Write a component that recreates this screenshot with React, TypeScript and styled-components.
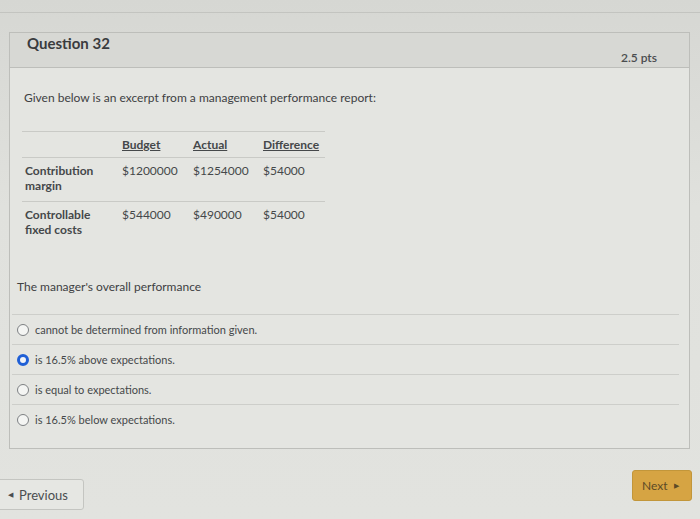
import React from "react";
import styled, { createGlobalStyle } from "styled-components";

const Global = createGlobalStyle`
  html, body { margin: 0; padding: 0; background: #dcddd9; }
  body { font-family: Lato, "Open Sans", "Liberation Sans", sans-serif; color: #3e4143; }
  * { box-sizing: border-box; }
`;

const Page = styled.div`
  width: 700px;
  height: 519px;
  overflow: hidden;
  display: flex;
  flex-direction: column;
  background: linear-gradient(180deg, #d6d7d3 0%, #e0e1dd 40%, #e2e3df 100%);
`;

const TopRule = styled.div`
  height: 13px;
  border-bottom: 1px solid #c3c4c0;
  flex: none;
`;

const Card = styled.section`
  margin: 19px 10px 0 9px;
  border: 1px solid #bdbeba;
  background: #e4e5e1;
  display: flex;
  flex-direction: column;
`;

const Header = styled.header`
  height: 35px;
  background: #d7d8d4;
  border-bottom: 1px solid #bdbeba;
  display: flex;
  justify-content: space-between;
  padding: 0 32px 0 17px;
`;

const Title = styled.h2`
  margin: 0;
  padding-top: 0px;
  font-size: 15px;
  font-weight: 700;
  color: #3a3c3e;
  align-self: flex-start;
  line-height: 20px;
`;

const Points = styled.span`
  align-self: flex-end;
  padding-bottom: 2px;
  font-size: 12px;
  font-weight: 600;
  color: #4a4d4f;
`;

const Body = styled.div`
  padding: 22px 20px 14px 14px;
  display: flex;
  flex-direction: column;
`;

const Prompt = styled.p`
  margin: 0;
  font-size: 12px;
  line-height: 16px;
  color: #3e4143;
`;

const Table = styled.table`
  margin: 25px 0 0 -2px;
  border-collapse: collapse;
  width: 303px;
  font-size: 12px;
  line-height: 15px;
  color: #45484a;
`;

const HeadCell = styled.th<{ $blank?: boolean }>`
  text-align: left;
  font-weight: 700;
  text-decoration: ${(p) => (p.$blank ? "none" : "underline")};
  padding: 5px 0 5px 0;
  border-top: 1px solid #c9cac6;
  border-bottom: 1px solid #c9cac6;
  &:first-child { width: 100px; }
  &:nth-child(2) { width: 71px; }
  &:nth-child(3) { width: 70px; }
`;

const Row = styled.tr<{ $last?: boolean }>`
  border-bottom: ${(p) => (p.$last ? "none" : "1px solid #c9cac6")};
`;

const LabelCell = styled.td`
  font-weight: 700;
  vertical-align: top;
  padding: 5px 0 8px 3px;
`;

const ValueCell = styled.td`
  vertical-align: top;
  padding: 5px 0 8px 0;
`;

const Stem = styled.p`
  margin: 34px 0 0 -7px;
  font-size: 12px;
  line-height: 16px;
  color: #3e4143;
`;

const Answers = styled.div`
  margin: 19px -10px 0 -12px;
  display: flex;
  flex-direction: column;
`;

const Answer = styled.label`
  height: 30px;
  border-top: 1px solid #cdceca;
  display: flex;
  align-items: center;
  gap: 6px;
  padding-left: 5px;
  font-size: 11px;
  color: #45484a;
`;

const Radio = styled.span<{ $on?: boolean }>`
  width: 12px;
  height: 12px;
  border-radius: 50%;
  flex: none;
  background: ${(p) => (p.$on ? "#f2f4f8" : "#f4f5f3")};
  border: ${(p) => (p.$on ? "3.5px solid #1f5fd6" : "1px solid #7d8083")};
`;

const Footer = styled.div`
  flex: 1;
  display: flex;
  justify-content: space-between;
  align-items: flex-start;
  padding: 21px 8px 0 0;
`;

const PrevButton = styled.button`
  margin-top: 9px;
  margin-left: -4px;
  width: 88px;
  height: 31px;
  border: 1px solid #c4c5c1;
  border-radius: 3px;
  background: #e6e7e3;
  font-family: inherit;
  font-size: 13px;
  color: #4a4d50;
  display: flex;
  align-items: center;
  gap: 6px;
  padding-left: 11px;
`;

const NextButton = styled.button`
  width: 60px;
  height: 31px;
  border: 1px solid #c2963a;
  border-radius: 3px;
  background: #d6a443;
  font-family: inherit;
  font-size: 12px;
  color: #5c4a26;
  display: flex;
  align-items: center;
  gap: 6px;
  padding-left: 9px;
`;

const Caret = styled.span`
  font-size: 7px;
`;

const answers = [
  { text: "cannot be determined from information given.", on: false },
  { text: "is 16.5% above expectations.", on: true },
  { text: "is equal to expectations.", on: false },
  { text: "is 16.5% below expectations.", on: false },
];

export default function App() {
  return (
    <Page>
      <Global />
      <TopRule />
      <Card>
        <Header>
          <Title>Question 32</Title>
          <Points>2.5 pts</Points>
        </Header>
        <Body>
          <Prompt>Given below is an excerpt from a management performance report:</Prompt>
          <Table>
            <thead>
              <tr>
                <HeadCell as="td" $blank></HeadCell>
                <HeadCell>Budget</HeadCell>
                <HeadCell>Actual</HeadCell>
                <HeadCell>Difference</HeadCell>
              </tr>
            </thead>
            <tbody>
              <Row>
                <LabelCell>
                  Contribution
                  <br />
                  margin
                </LabelCell>
                <ValueCell>$1200000</ValueCell>
                <ValueCell>$1254000</ValueCell>
                <ValueCell>$54000</ValueCell>
              </Row>
              <Row $last>
                <LabelCell>
                  Controllable
                  <br />
                  fixed costs
                </LabelCell>
                <ValueCell>$544000</ValueCell>
                <ValueCell>$490000</ValueCell>
                <ValueCell>$54000</ValueCell>
              </Row>
            </tbody>
          </Table>
          <Stem>The manager's overall performance</Stem>
          <Answers>
            {answers.map((a) => (
              <Answer key={a.text}>
                <Radio $on={a.on} />
                {a.text}
              </Answer>
            ))}
          </Answers>
        </Body>
      </Card>
      <Footer>
        <PrevButton>
          <Caret>◀</Caret>Previous
        </PrevButton>
        <NextButton>
          Next<Caret>▶</Caret>
        </NextButton>
      </Footer>
    </Page>
  );
}
